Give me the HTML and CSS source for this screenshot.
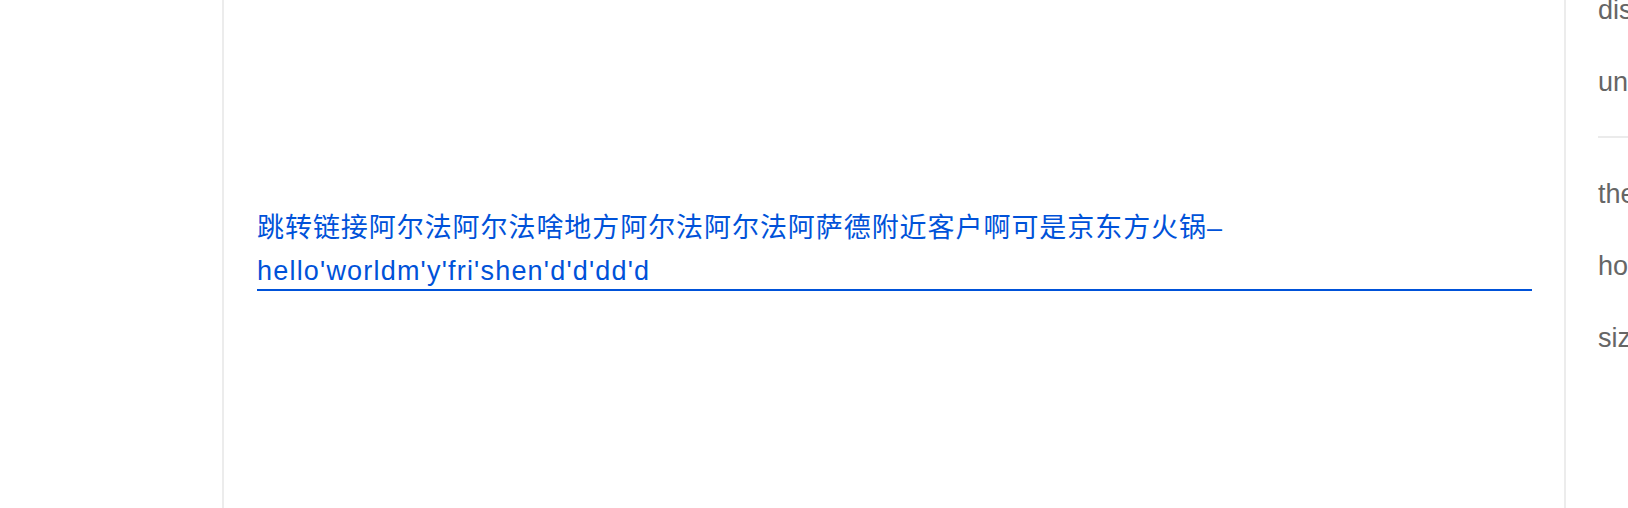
FILE: index.html
```html
<!DOCTYPE html>
<html lang="zh-CN">
<head>
<meta charset="utf-8">
<title>Link</title>
<link rel="stylesheet" href="styles.css">
</head>
<body>
<div class="layout">
  <aside class="sidebar"></aside>
  <main class="main">
    <a class="link" href="#">
      <span class="link-line link-cjk">跳转链接阿尔法阿尔法啥地方阿尔法阿尔法阿萨德附近客户啊可是京东方火锅–</span>
      <span class="link-line link-latin">hello'worldm'y'fri'shen'd'd'dd'd</span>
    </a>
  </main>
  <nav class="toc">
    <ul class="toc-list">
      <li class="toc-item">display</li>
      <li class="toc-item">underline</li>
    </ul>
    <div class="toc-divider"></div>
    <ul class="toc-list toc-list-second">
      <li class="toc-item">theme</li>
      <li class="toc-item">hover</li>
      <li class="toc-item">size</li>
    </ul>
  </nav>
</div>
</body>
</html>
```
FILE: styles.css
```css
html, body {
  margin: 0;
  padding: 0;
  background: #ffffff;
}

body {
  width: 1628px;
  height: 508px;
  overflow: hidden;
}

.layout {
  display: flex;
  height: 508px;
}

.sidebar {
  flex: 0 0 222px;
  border-right: 2px solid #ececec;
}

.main {
  flex: 0 0 1342px;
  box-sizing: border-box;
  padding: 210px 32px 0 33px;
  border-right: 2px solid #ececec;
}

.link {
  display: flex;
  flex-direction: column;
  gap: 7px;
  color: #0052d9;
  text-decoration: none;
  border-bottom: 2px solid #0052d9;
}

.link-line {
  display: block;
  line-height: 36px;
  white-space: nowrap;
}

.link-cjk {
  font-family: "Liberation Sans", "Noto Sans CJK SC", sans-serif;
  font-size: 27px;
  letter-spacing: 0.94px;
}

.link-latin {
  font-family: "Liberation Sans", "Noto Sans CJK SC", sans-serif;
  font-size: 27px;
  letter-spacing: 1.2px;
}

.toc {
  flex: 1 1 auto;
  min-width: 0;
  padding-left: 32px;
  overflow: hidden;
  font-family: "Liberation Sans", "Noto Sans CJK SC", sans-serif;
  font-size: 27px;
  color: #666666;
}

.toc-list {
  list-style: none;
  margin: -26px 0 0;
  padding: 0;
}

.toc-list-second {
  margin-top: 0;
}

.toc-item {
  line-height: 72px;
  white-space: nowrap;
}

.toc-divider {
  height: 2px;
  background: #ebebeb;
  margin: 18px 0 20px;
}
```
